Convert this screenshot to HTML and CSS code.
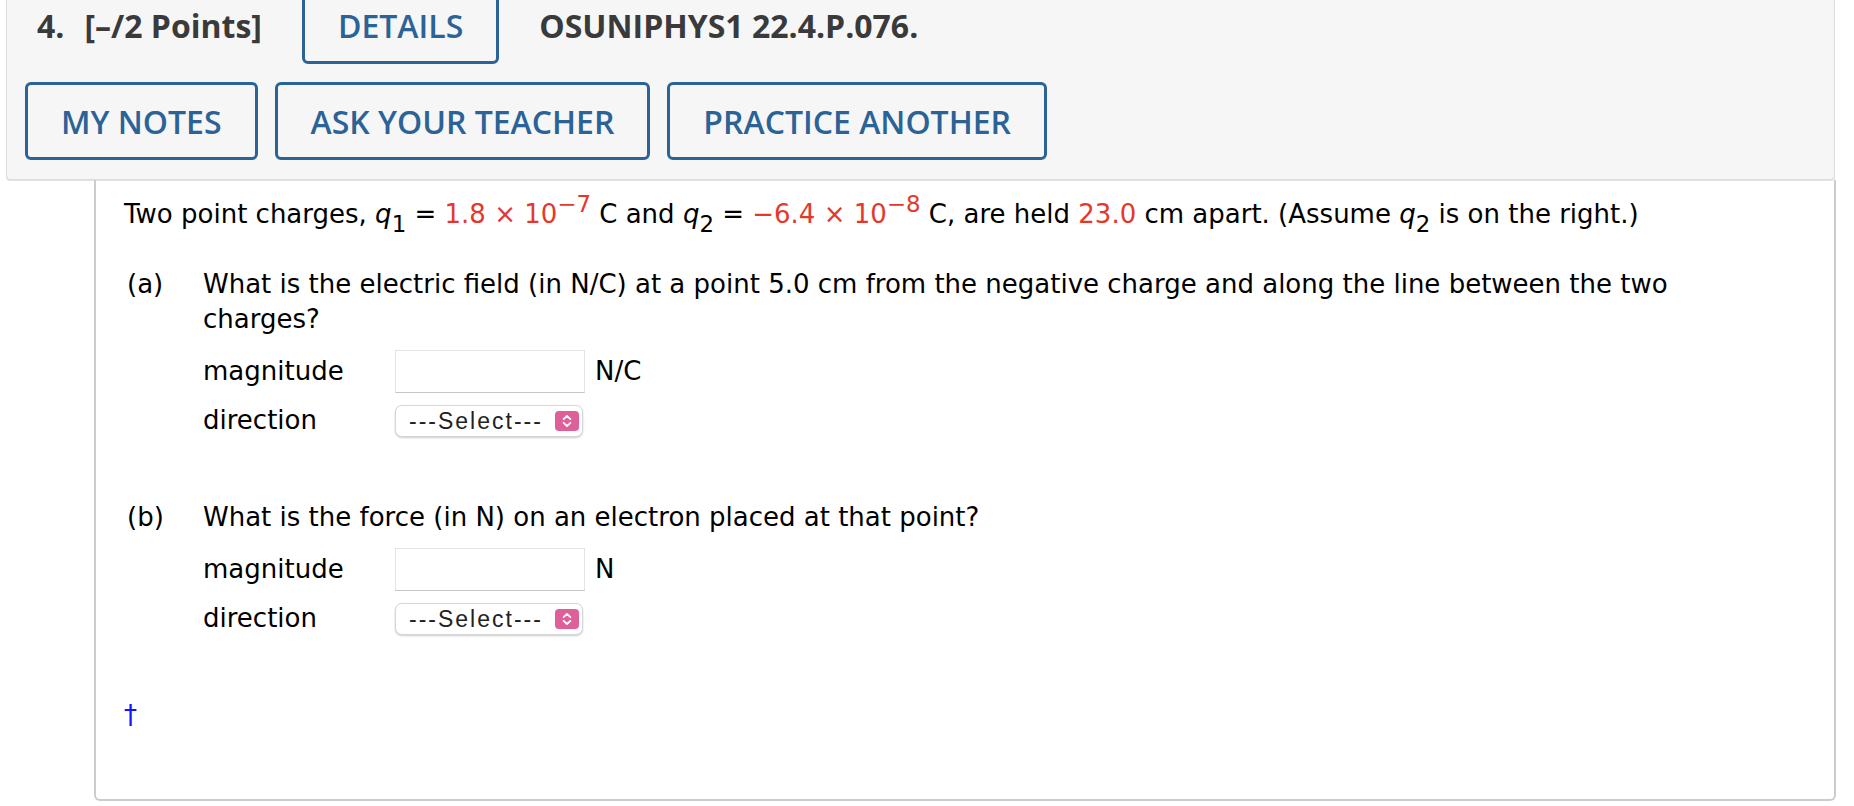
FILE: index.html
```html
<!doctype html>
<html lang="en">
<head>
    <meta charset="UTF-8">
    <title>OSUNIPHYS1 22.4.P.076</title>
    <link rel="stylesheet" href="styles.css">
</head>
<body>
<div class="qhead">
    <div class="qhead-row">
        <h2 class="qtitle"><span>4.</span><span>[&ndash;/2 Points]</span></h2>
        <button class="btn" type="button">DETAILS</button>
        <span class="qref">OSUNIPHYS1 22.4.P.076.</span>
    </div>
    <div class="qhead-row tools">
        <button class="btn" type="button">MY NOTES</button>
        <button class="btn" type="button">ASK YOUR TEACHER</button>
        <button class="btn" type="button">PRACTICE ANOTHER</button>
    </div>
</div>

<div class="qbody">
    <p class="intro">Two point charges, <i>q</i><sub>1</sub> = <span class="given">1.8 &times; 10<sup>&minus;7</sup></span> C and <i>q</i><sub>2</sub> = <span class="given">&minus;6.4 &times; 10<sup>&minus;8</sup></span> C, are held <span class="given">23.0</span> cm apart. (Assume <i>q</i><sub>2</sub> is on the right.)</p>

    <div class="part">
        <span class="part-label">(a)</span>
        <div class="part-main">
            <p class="part-q">What is the electric field (in N/C) at a point 5.0 cm from the negative charge and along the line between the two charges?</p>
            <div class="answers">
                <span>magnitude</span>
                <input class="answer-input" type="text">
                <span>N/C</span>
                <span>direction</span>
                <label class="select">
                    <select>
                        <option>---Select---</option>
                        <option>toward the positive charge</option>
                        <option>toward the negative charge</option>
                    </select>
                    <svg class="select-arrow" width="24" height="20" viewBox="0 0 24 20"><rect width="24" height="20" rx="4" fill="#df5f99"/><path d="M8.6 8.2 L12 5 L15.4 8.2 M8.6 11.8 L12 15 L15.4 11.8" fill="none" stroke="#fff" stroke-width="1.8" stroke-linecap="round" stroke-linejoin="round"/></svg>
                </label>
                <span></span>
            </div>
        </div>
    </div>

    <div class="part">
        <span class="part-label">(b)</span>
        <div class="part-main">
            <p class="part-q">What is the force (in N) on an electron placed at that point?</p>
            <div class="answers">
                <span>magnitude</span>
                <input class="answer-input" type="text">
                <span>N</span>
                <span>direction</span>
                <label class="select">
                    <select>
                        <option>---Select---</option>
                        <option>toward the positive charge</option>
                        <option>toward the negative charge</option>
                    </select>
                    <svg class="select-arrow" width="24" height="20" viewBox="0 0 24 20"><rect width="24" height="20" rx="4" fill="#df5f99"/><path d="M8.6 8.2 L12 5 L15.4 8.2 M8.6 11.8 L12 15 L15.4 11.8" fill="none" stroke="#fff" stroke-width="1.8" stroke-linecap="round" stroke-linejoin="round"/></svg>
                </label>
                <span></span>
            </div>
        </div>
    </div>

    <p class="footnote">&dagger;</p>
</div>
</body>
</html>
```

FILE: styles.css
```css
* {
    box-sizing: border-box;
}
body {
    margin: 0;
    font-family: "DejaVu Sans", Verdana, sans-serif;
    color: #000;
    background: #fff;
    overflow: hidden;
}

/* question header, page is scrolled a bit so its top is cut off */
.qhead {
    margin: -31px 19px 0 6px;
    padding: 16px 18px 19px;
    background: #f6f6f6;
    border: 1px solid #dcdcdc;
    border-radius: 4px;
    box-shadow: 0 1px 0 #e3e3e3;
    font-family: "Open Sans", "Liberation Sans", sans-serif;
}
.qhead-row {
    display: flex;
    align-items: center;
    gap: 40px;
}
.qhead-row.tools {
    gap: 17px;
    margin-top: 18px;
}
.qtitle {
    margin: 0 0 0 12px;
    display: flex;
    gap: 20px;
    font-size: 32px;
    font-weight: 700;
    color: #3a3a3a;
}
.qref {
    font-size: 32px;
    font-weight: 700;
    color: #3a3a3a;
}
.btn {
    height: 78px;
    padding: 0 33px;
    border: 3px solid #2b6396;
    border-radius: 6px;
    background: transparent;
    color: #2b6396;
    font-family: "Open Sans", "Liberation Sans", sans-serif;
    font-size: 32px;
    font-weight: 600;
    cursor: pointer;
}

/* question body */
.qbody {
    margin: 0 18px 0 94px;
    padding: 17px 90px 66px 28px;
    border: 2px solid #cccccc;
    border-top: 0;
    border-radius: 0 0 6px 6px;
    font-size: 26px;
    line-height: 35px;
}
.qbody p {
    margin: 0;
}
.intro {
    margin-bottom: 35px !important;
}
.given {
    color: #e5382b;
}
sup, sub {
    font-size: 0.88em;
    line-height: 0;
}
sup {
    vertical-align: 0.5em;
}
sub {
    vertical-align: -0.4em;
}
.part {
    display: flex;
    margin-bottom: 62px;
}
.part-label {
    width: 79px;
    flex: none;
    padding-left: 3px;
}
.part-main {
    flex: 1;
}
.answers {
    display: grid;
    grid-template-columns: 182px auto 1fr;
    column-gap: 10px;
    row-gap: 10px;
    align-items: center;
    margin-top: 13px;
}
.answer-input {
    width: 190px;
    height: 43px;
    border: 1px solid #e4e4e4;
    border-bottom-color: #c6c6c6;
    background: #fff;
    font-size: 22px;
}
.select {
    width: 188px;
    height: 32px;
    display: flex;
    align-items: center;
    padding: 0 3px 0 13px;
    border: 1px solid #d6d6d6;
    border-radius: 7px;
    background: #fff;
    box-shadow: 0 1px 2px rgba(0, 0, 0, 0.2);
}
.select select {
    flex: 1;
    min-width: 0;
    appearance: none;
    -webkit-appearance: none;
    border: 0;
    padding: 0;
    background: transparent;
    font-family: "Liberation Sans", Arial, sans-serif;
    font-size: 23px;
    letter-spacing: 2px;
    color: #222;
    outline: none;
}
.select-arrow {
    flex: none;
    display: block;
}
.footnote {
    color: #1414ff;
}
```
